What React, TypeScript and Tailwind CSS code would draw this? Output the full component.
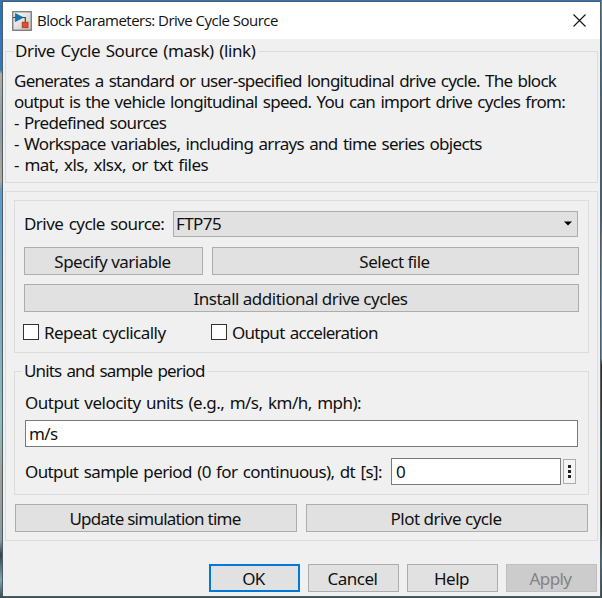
import type { ReactNode } from "react";
import clsx from "clsx";

type ButtonProps = {
  children: ReactNode;
  className?: string;
};

function Button({ children, className }: ButtonProps) {
  return (
    <button
      className={clsx(
        "flex h-7 items-center justify-center border pr-0.5 whitespace-nowrap",
        className ?? "border-[#adadad] bg-[#e1e1e1] tracking-[-0.5px]"
      )}
    >
      {children}
    </button>
  );
}

function Checkbox({ label, className }: { label: string; className?: string }) {
  return (
    <label className={clsx("flex h-4 items-center whitespace-nowrap", className)}>
      <span className="mr-[5px] h-4 w-4 shrink-0 border border-[#333333] bg-white" />
      {label}
    </label>
  );
}

function BlockIcon() {
  return (
    <svg width="20" height="20" viewBox="0 0 20 20">
      <defs>
        <linearGradient id="tile" x1="0" y1="0" x2="1" y2="1">
          <stop offset="0" stopColor="#ffffff" />
          <stop offset="1" stopColor="#c4c4c4" />
        </linearGradient>
      </defs>
      <rect x="0.75" y="0.75" width="18.5" height="18.5" fill="url(#tile)" stroke="#757575" strokeWidth="1.3" />
      <path d="M1 6.5H4M10 6.5H13.3V11" fill="none" stroke="#444" strokeWidth="1.2" />
      <path d="M3.2 2.3L11.2 6.5L3.2 10.7Z" fill="#1775ae" stroke="#125b8a" strokeWidth="0.5" />
      <rect x="10.3" y="11.3" width="5.7" height="5.4" fill="#dc4f2a" stroke="#b83a1c" />
    </svg>
  );
}

export default function App() {
  return (
    <div className="flex h-[598px] w-[602px] overflow-hidden bg-[linear-gradient(to_bottom,#2d74b8_0px,#3579ba_70px,#b5aaa0_74px,#8d9a9c_130px,#b8a79a_180px,#5c9bc8_190px,#7aa5bc_300px,#8fbdb9_420px,#a79d92_480px,#8b9c9d_540px,#34434c_555px,#7fa9ac_580px,#354b50_598px)] pt-px pb-px pl-[2px] font-['Noto_Sans','Open_Sans',sans-serif] text-[17px] leading-[21px] tracking-[-0.6px] text-[#111] [word-spacing:1.5px]">
      <div className="flex h-[596px] w-[599px] shrink-0 flex-col border border-[#4d5d68] bg-[#f0f0f0]">
        {/* Title bar */}
        <header className="flex h-[37px] shrink-0 items-center bg-white pr-[14px] pl-[9px] font-['Open_Sans','Noto_Sans',sans-serif] text-[15px] tracking-[-0.52px] [word-spacing:0px]">
          <BlockIcon />
          <h1 className="ml-[5px] flex-1">Block Parameters: Drive Cycle Source</h1>
          <svg width="13" height="13" viewBox="0 0 13 13" stroke="#111" strokeWidth="1.1">
            <path d="M0.5 0.5L12.5 12.5M12.5 0.5L0.5 12.5" />
          </svg>
        </header>

        {/* Description */}
        <section className="mx-[2px] mt-[12px] h-[132px] border border-[#dcdcdc] pl-[7px]">
          <h2 className="-mt-[12px] w-fit bg-[#f0f0f0] px-[2px] pr-1 tracking-[-0.4px]">Drive Cycle Source (mask) (link)</h2>
          <div className="mt-[9px] ml-px whitespace-nowrap">
            <p className="tracking-[-0.74px]">Generates a standard or user-specified longitudinal drive cycle. The block</p>
            <p className="tracking-[-0.71px]">output is the vehicle longitudinal speed. You can import drive cycles from:</p>
            <p className="tracking-[-0.7px]">- Predefined sources</p>
            <p className="tracking-[-0.68px]">- Workspace variables, including arrays and time series objects</p>
            <p className="tracking-[-0.5px]">- mat, xls, xlsx, or txt files</p>
          </div>
        </section>

        <section className="mx-[2px] mt-2 h-[350px] border border-[#dcdcdc] px-2 pt-2">
          {/* Cycle selection */}
          <div className="h-[153px] border border-[#dcdcdc] px-[9px] pt-[10px]">
            <div className="flex items-center pr-px">
              <span className="w-[149px] pb-px tracking-[-0.55px] whitespace-nowrap">Drive cycle source:</span>
              <div className="flex h-[26px] flex-1 items-center justify-between border border-[#adadad] bg-[#e1e1e1] pr-[5px] pb-px pl-[2px]">
                FTP75
                <svg width="8" height="5" viewBox="0 0 8 5">
                  <path d="M0 0.5H8L4 4.5Z" fill="#000" />
                </svg>
              </div>
            </div>
            <div className="mt-[10px] grid grid-cols-[179px_1fr] gap-[9px]">
              <Button>Specify variable</Button>
              <Button>Select file</Button>
            </div>
            <div className="mt-[9px] grid">
              <Button>Install additional drive cycles</Button>
            </div>
            <div className="mt-3 -ml-px grid grid-cols-[188px_1fr]">
              <Checkbox label="Repeat cyclically" className="tracking-[-0.54px]" />
              <Checkbox label="Output acceleration" className="tracking-[-0.75px]" />
            </div>
          </div>

          {/* Units and sample period */}
          <div className="mt-[18px] h-[124px] border border-[#dcdcdc] px-[10px]">
            <h2 className="-mt-[12px] -ml-[3px] w-fit bg-[#f0f0f0] px-[2px] tracking-[-0.85px]">Units and sample period</h2>
            <p className="mt-[11px] tracking-[-0.51px]">Output velocity units (e.g., m/s, km/h, mph):</p>
            <div className="mt-[7px] flex h-[27px] items-center border border-[#7a7a7a] bg-white pl-[3px]">m/s</div>
            <div className="mt-[11px] flex items-center">
              <span className="w-[366px] pb-px tracking-[-0.61px] whitespace-nowrap">Output sample period (0 for continuous), dt [s]:</span>
              <div className="flex h-[27px] w-[170px] items-center border border-[#7a7a7a] bg-white pb-px pl-[4px]">0</div>
              <button className="ml-[2px] flex h-[25px] w-[13px] flex-col items-center justify-center gap-[2px] border border-[#adadad] bg-[#f4f4f4]">
                <span className="h-[3px] w-[3px] bg-[#222]" />
                <span className="h-[3px] w-[3px] bg-[#222]" />
                <span className="h-[3px] w-[3px] bg-[#222]" />
              </button>
            </div>
          </div>

          <div className="mt-[9px] grid grid-cols-2 gap-[9px] pr-px pl-px">
            <Button className="border-[#adadad] bg-[#e1e1e1] tracking-[-0.75px]">Update simulation time</Button>
            <Button>Plot drive cycle</Button>
          </div>
        </section>

        {/* Dialog actions */}
        <footer className="mt-[23px] grid grid-cols-[91px_91px_91px_91px] justify-end gap-2 pr-[3px]">
          <Button className="border-2 border-[#0078d7] bg-[#e1e1e1]">OK</Button>
          <Button>Cancel</Button>
          <Button>Help</Button>
          <Button className="border-[#bfbfbf] bg-[#cccccc] text-[#838383]">Apply</Button>
        </footer>
      </div>

      {/* Desktop strip right of the window */}
      <div className="w-px bg-[linear-gradient(to_bottom,#6f8a8e_0px,#4d7c96_40px,#2f6b9c_110px,#2f6b9c_220px,#6f7470_235px,#62a0b4_300px,#5a93a4_358px,#33281e_364px,#5a3c20_450px,#3b2f24_520px,#4f7480_560px,#2c4148_598px)]" />
    </div>
  );
}
